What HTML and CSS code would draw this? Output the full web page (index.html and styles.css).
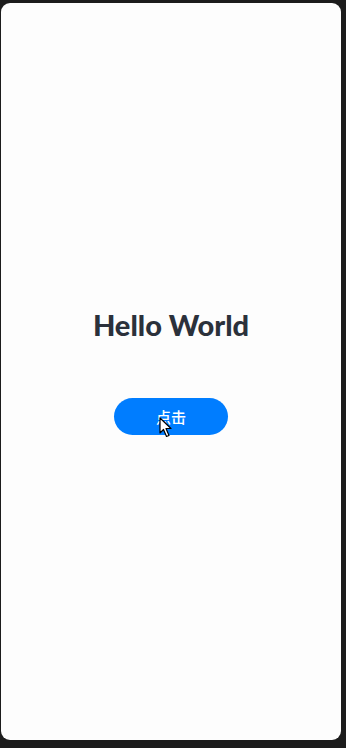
FILE: index.html
```html
<!DOCTYPE html>
<html lang="zh">
<head>
<meta charset="utf-8">
<link rel="stylesheet" href="styles.css">
</head>
<body>
<div class="screen">
  <div class="content">
    <h1 class="title">Hello World</h1>
    <div class="btn-wrap">
      <button class="btn">点击</button>
      <svg class="cursor" width="14" height="22" viewBox="0 0 14 22">
        <path d="M1 1 L1 16 L4.5 12.5 L7.5 19.5 L10 18.5 L7 11.5 L12 11.5 Z" fill="#fff" stroke="#000" stroke-width="1.2" stroke-linejoin="round"/>
      </svg>
    </div>
  </div>
</div>
</body>
</html>
```
FILE: styles.css
```css
html, body {
  margin: 0;
  padding: 0;
  background: #1c1c1c;
  width: 346px;
  height: 748px;
  overflow: hidden;
}
.screen {
  margin: 3px 5px 0 1px;
  height: 737px;
  background: #fdfdfd;
  border-radius: 9px;
  display: flex;
  flex-direction: column;
  align-items: center;
}
.content {
  margin-top: 302px;
  display: flex;
  flex-direction: column;
  align-items: center;
}
.title {
  margin: 0;
  font-family: Lato, Inter, sans-serif;
  font-weight: 900;
  font-size: 29px;
  line-height: 40px;
  color: #2b313b;
  letter-spacing: 0;
}
.btn-wrap {
  position: relative;
  margin-top: 53px;
}
.btn {
  width: 114px;
  height: 37px;
  border: none;
  border-radius: 19px;
  background: #007dff;
  color: #fff;
  font-family: "Noto Sans CJK SC", sans-serif;
  font-size: 15px;
  font-weight: 500;
  padding: 0;
}
.cursor {
  position: absolute;
  left: 45px;
  top: 19px;
}
```
